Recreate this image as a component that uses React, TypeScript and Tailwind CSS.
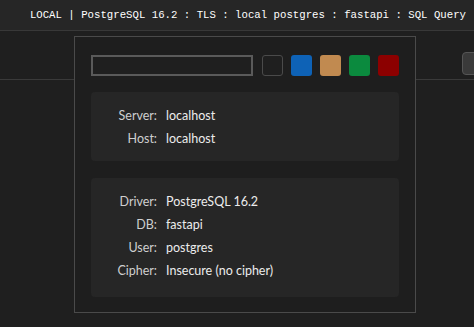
import React from 'react'

const swatches = [
  'bg-[#1f1f1f] border border-[#4a4a4a]',
  'bg-[#0e62b6]',
  'bg-[#c18a50]',
  'bg-[#0b8a3e]',
  'bg-[#8c0000]',
]

const serverRows = [
  ['Server:', 'localhost'],
  ['Host:', 'localhost'],
]

const driverRows = [
  ['Driver:', 'PostgreSQL 16.2'],
  ['DB:', 'fastapi'],
  ['User:', 'postgres'],
  ['Cipher:', 'Insecure (no cipher)'],
]

function InfoSection({ rows, className }: { rows: string[][]; className?: string }) {
  return (
    <div className={'bg-[#262626] rounded-sm flex flex-col gap-[5px] ' + (className ?? '')}>
      {rows.map(([label, value]) => (
        <div key={label} className="flex items-center h-[18px] text-[12.5px] leading-[18px]">
          <span className="w-[66px] text-right text-[#cfcfcf]">{label}</span>
          <span className="ml-[9px] text-[#ececec]">{value}</span>
        </div>
      ))}
    </div>
  )
}

export default function App() {
  return (
    <div
      className="relative w-[474px] h-[327px] overflow-hidden bg-[#1f1f1f]"
      style={{ fontFamily: 'Lato, "Open Sans", sans-serif' }}
    >
      {/* status bar */}
      <div className="h-[31px] bg-[#262626] border-b border-[#383838] flex items-center justify-end pr-[8px]">
        <span
          className="text-[10.7px] text-[#ffffff] whitespace-pre"
          style={{ fontFamily: '"Liberation Mono", "DejaVu Sans Mono", monospace' }}
        >
          LOCAL | PostgreSQL 16.2 : TLS : local postgres : fastapi : SQL Query
        </span>
      </div>

      {/* toolbar strip behind popup */}
      <div className="h-[49px] border-b border-[#3a3a3a] relative">
        <div className="absolute left-[462px] top-[21px] w-[20px] h-[23px] bg-[#3a3a3a] border border-[#555] rounded-sm" />
      </div>

      {/* popup */}
      <div className="absolute left-[74px] top-[36px] w-[342px] h-[277px] bg-[#1e1e1e] border border-[#4a4a4a] px-[16px] pt-[18px]">
        <div className="flex items-center">
          <div className="w-[162px] h-[21px] border-2 border-[#5a5a5a] bg-[#1f1f1f]" />
          <div className="flex gap-[8px] ml-[9px]">
            {swatches.map((s, i) => (
              <div key={i} className={'w-[21px] h-[21px] rounded-[3px] ' + s} />
            ))}
          </div>
        </div>

        <InfoSection rows={serverRows} className="mt-[16px] h-[69px] pt-[15px]" />
        <InfoSection rows={driverRows} className="mt-[17px] h-[119px] pt-[15px]" />
      </div>
    </div>
  )
}
